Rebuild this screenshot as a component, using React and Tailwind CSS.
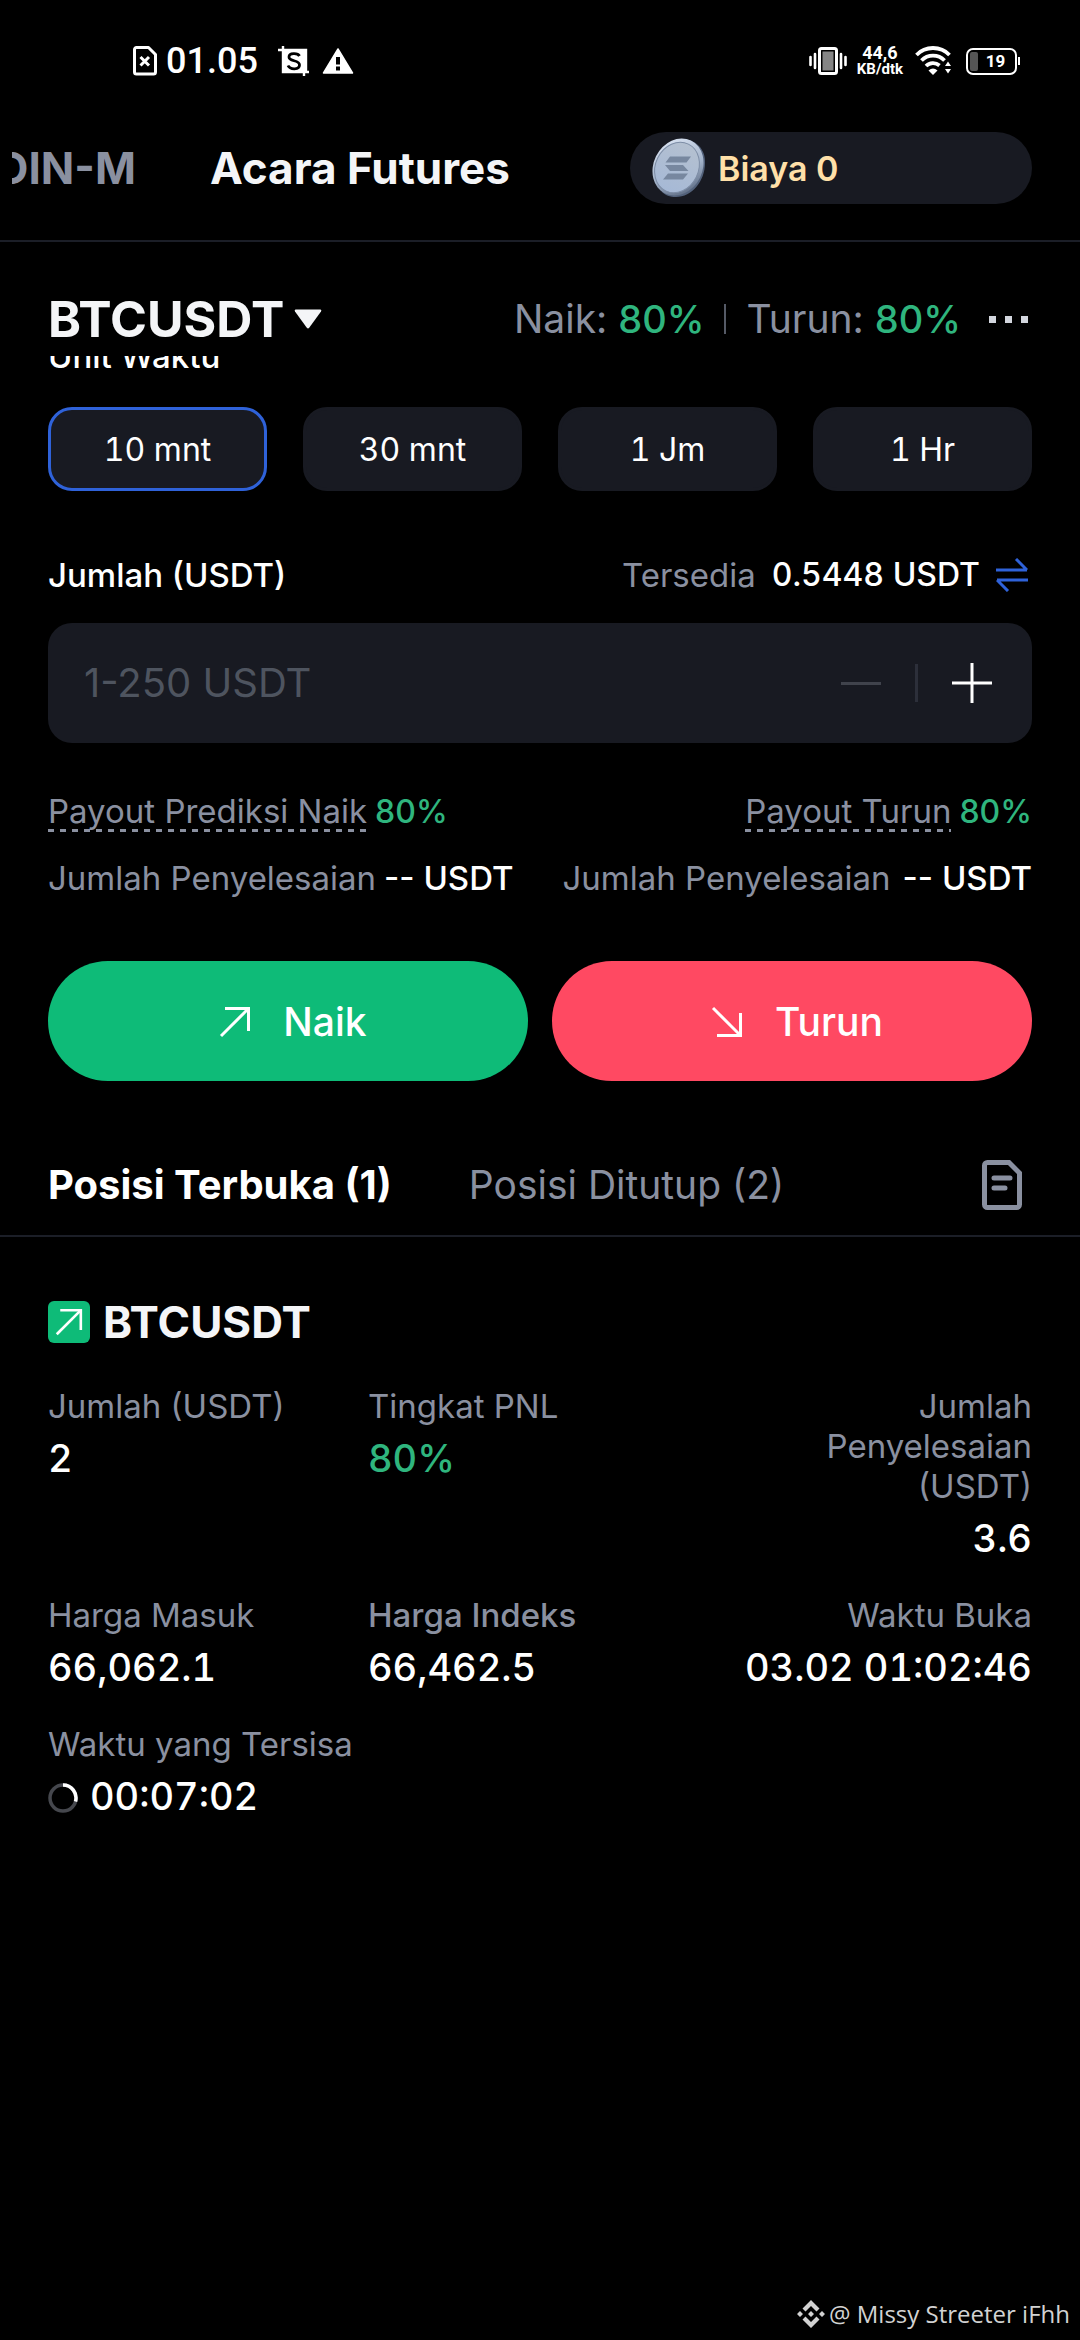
import React, { useState } from "react";

function ArrowUp({ className }) {
  return (
    <svg className={className} viewBox="0 0 32 32" fill="none" stroke="currentColor" strokeWidth="3" aria-hidden="true">
      <path d="M2 30 L29 3" />
      <path d="M6 2.5 H29.5 V25" />
    </svg>
  );
}

function ArrowDown({ className }) {
  return (
    <svg className={className} viewBox="0 0 32 32" fill="none" stroke="currentColor" strokeWidth="3" aria-hidden="true">
      <path d="M2 2 L29 29" />
      <path d="M6 29.5 H29.5 V7" />
    </svg>
  );
}

function StatusBar() {
  return (
    <div className="flex h-[120px] items-center justify-between pt-0.5 pr-[60px] pl-[132px] font-[Roboto,sans-serif]">
      <div className="flex items-center">
        <svg className="h-8 w-[26px]" viewBox="0 0 26 32" fill="none" stroke="white" aria-hidden="true">
          <path d="M4 2.5 H16.5 L23.5 9.5 V27 a2 2 0 0 1 -2 2 H4.500 a2 2 0 0 1 -2 -2 V4.500 a2 2 0 0 1 2 -2 Z" strokeWidth="3" strokeLinejoin="round" />
          <path d="M8.500 12 L17 20.500 M17 12 L8.500 20.500" strokeWidth="3" />
        </svg>
        <span className="ml-2 text-[36px] leading-10 font-medium">01.05</span>
        <svg className="ml-5 size-8" viewBox="0 0 32 32" aria-hidden="true">
          <path d="M4 5 H28 V27 H5 V5 M0 5 H6 M5 1 V8 M24 27 H31 M26 24 V31" fill="white" stroke="white" strokeWidth="2.400" />
          <path d="M21.500 11 C20 8 11 7.500 11 12 C11 17 21.500 14.500 21.500 20 C21.500 25 12 25 10 20.500" fill="none" stroke="black" strokeWidth="2.800" />
        </svg>
        <svg className="ml-3 h-7 w-8" viewBox="0 0 32 28" aria-hidden="true">
          <path d="M16 2 L30.500 26 H1.500 Z" fill="white" stroke="white" strokeWidth="1.500" strokeLinejoin="round" />
          <path d="M16 10 V17.500 M16 19.500 V23.500" stroke="black" strokeWidth="4" />
        </svg>
      </div>
      <div className="flex items-center">
        <svg className="h-7 w-[38px]" viewBox="0 0 38 28" fill="none" stroke="white" strokeWidth="2.600" strokeLinecap="round" aria-hidden="true">
          <rect x="10.500" y="1.500" width="17" height="25" rx="2" strokeWidth="3" />
          <rect x="13.500" y="4.500" width="11" height="19" fill="#858585" stroke="none" />
          <path d="M1.500 10 V18 M6 7 V21 M32 7 V21 M36.500 10 V18" />
        </svg>
        <div className="mr-3 ml-2.5 flex flex-col items-center leading-4 font-bold">
          <span className="text-[18px]">44,6</span>
          <span className="text-[15px]">KB/dtk</span>
        </div>
        <svg className="h-[30px] w-9" viewBox="0 0 36 30" fill="none" stroke="white" strokeWidth="3.800" aria-hidden="true">
          <path d="M1.500 9 A23 23 0 0 1 34.500 9" />
          <path d="M6.500 14.500 A16 16 0 0 1 29.500 14.500" />
          <path d="M11 20 A10 10 0 0 1 24.500 19.500" />
          <path d="M13.500 24.500 Q18 20.500 22.500 24.500 L18 29 Z" fill="white" stroke="none" />
          <path d="M33 15.500 L36 20 H30 Z M30 23 H36 L33 27.500 Z" fill="white" stroke="none" />
        </svg>
        <div className="ml-[15px] flex h-[27px] w-[51px] items-center rounded-[7px] border-2 border-white p-0.5">
          <span className="h-[19px] w-2 rounded-[2px] bg-[#555]" />
          <span className="flex-1 text-center text-[17px] leading-5 font-bold">19</span>
        </div>
        <span className="ml-px h-2 w-0.5 bg-white" />
      </div>
    </div>
  );
}

function Coin() {
  return (
    <svg className="h-[60px] w-14" viewBox="0 0 56 60" aria-hidden="true">
      <defs>
        <linearGradient id="coinEdge" x1="0" y1="0" x2="1" y2="1">
          <stop offset="0" stopColor="#e6eefb" />
          <stop offset="0.550" stopColor="#a3b3ca" />
          <stop offset="1" stopColor="#46546c" />
        </linearGradient>
        <linearGradient id="coinFace" x1="0" y1="0" x2="0" y2="1">
          <stop offset="0" stopColor="#b4c0d0" />
          <stop offset="1" stopColor="#a6b9d6" />
        </linearGradient>
      </defs>
      <path d="M30 1 C44 0 56 10 55 25 C55 43 42 59 26 59 C20 59 15 57 12 54 Z" fill="#52617a" />
      <ellipse cx="28" cy="29" rx="24.500" ry="29.500" transform="rotate(26 28 29)" fill="url(#coinEdge)" />
      <ellipse cx="27" cy="29.500" rx="21.500" ry="26" transform="rotate(26 27 29.500)" fill="url(#coinFace)" stroke="#7d8da6" strokeWidth="1" />
      <path d="M20 18.500 H41 L36.500 24.500 H15.500 Z M15 27 H33 L38.500 33 H20 Z M18 35.500 H38 L33 41.500 H13 Z" fill="#77879f" />
    </svg>
  );
}

function Header() {
  return (
    <header className="flex h-[122px] items-center justify-between border-b-2 border-[#1b1e27] pr-12 pb-6 pl-3">
      <nav className="flex items-center gap-[74px] overflow-hidden text-[44px] leading-[56px] font-bold whitespace-nowrap">
        <a href="#coin" className="-ml-[50px] text-[#8a90a0]">COIN-M</a>
        <a href="#acara" className="text-[#f4f5f7]">Acara Futures</a>
      </nav>
      <button className="flex h-[72px] w-[402px] items-center gap-3 rounded-full bg-[#181a22] pl-5 text-[34px] font-semibold text-[#ffe0a9]">
        <Coin />
        Biaya 0
      </button>
    </header>
  );
}

function PairBar() {
  return (
    <div className="flex h-[114px] items-center justify-between px-12 pt-10">
      <button className="flex items-center gap-2.5 text-[50px] leading-[60px] font-bold text-[#f4f5f7]">
        BTCUSDT
        <svg className="h-5 w-7" viewBox="0 0 28 20" fill="currentColor" aria-hidden="true">
          <path d="M1.500 0.500 H26.500 Q28 1 27 2.500 L15.200 18.800 Q14 20 12.800 18.800 L1 2.500 Q0 1 1.500 0.500 Z" />
        </svg>
      </button>
      <div className="flex items-center text-[39px] leading-[48px] text-[#8a90a0]">
        <span>Naik: <span className="text-[38px] font-medium text-[#2fb57e]">80%</span></span>
        <span className="mx-5 h-[30px] w-0.5 bg-[#555a66]" />
        <span>Turun: <span className="text-[38px] font-medium text-[#2fb57e]">80%</span></span>
        <button className="mr-1 ml-7 flex gap-[9px]" aria-label="Lainnya">
          <span className="size-[7px] bg-[#d3d6de]" />
          <span className="size-[7px] bg-[#d3d6de]" />
          <span className="size-[7px] bg-[#d3d6de]" />
        </button>
      </div>
    </div>
  );
}

function TimeUnits() {
  const [active, setActive] = useState("10 mnt");
  return (
    <section className="overflow-hidden px-12">
      <h2 className="-mt-5 text-[33px] leading-10 font-medium">Unit Waktu</h2>
      <div className="mt-[31px] grid grid-cols-4 gap-9">
        {["10 mnt", "30 mnt", "1 Jm", "1 Hr"].map((t) => (
          <button
            key={t}
            onClick={() => setActive(t)}
            className={
              active === t
                ? "h-[84px] rounded-3xl border-3 border-[#2f62d9] bg-[#181a22] pt-0.5 text-[32px] tabular-nums"
                : "h-[84px] rounded-3xl border-3 border-[#181a22] bg-[#181a22] pt-0.5 text-[32px] tabular-nums"
            }
          >
            {t}
          </button>
        ))}
      </div>
    </section>
  );
}

function Amount() {
  return (
    <section className="mt-16 px-12">
      <div className="flex items-center justify-between text-[33px] leading-10">
        <label htmlFor="amount" className="font-medium">Jumlah (USDT)</label>
        <div className="flex items-center">
          <span className="text-[#8a90a0]">Tersedia</span>
          <span className="ml-4 text-[32px] font-medium tabular-nums">0.5448 USDT</span>
          <button className="mr-1 ml-4" aria-label="Transfer">
            <svg className="block h-[34px] w-8" viewBox="0 0 32 34" fill="none" stroke="#2f62d9" strokeWidth="3" aria-hidden="true">
              <path d="M0 12 H31 M20 1 L31 12 M32 22 H1 M1 22 L12 33" />
            </svg>
          </button>
        </div>
      </div>
      <div className="mt-7 flex h-[120px] items-center rounded-3xl bg-[#181a22] pr-10 pl-9">
        <input id="amount" placeholder="1-250 USDT" className="min-w-0 flex-1 bg-transparent text-[40px] outline-none placeholder:text-[#4e545f]" />
        <button aria-label="Kurangi" className="flex size-10 items-center justify-center">
          <span className="h-[3px] w-10 bg-[#40434c]" />
        </button>
        <span className="mx-[34px] h-[38px] w-[3px] bg-[#2c2f3a]" />
        <button aria-label="Tambah">
          <svg className="block size-10" viewBox="0 0 40 40" stroke="white" strokeWidth="3" aria-hidden="true">
            <path d="M0 20 H40 M20 0 V40" />
          </svg>
        </button>
      </div>
    </section>
  );
}

function Payout({ label, right }) {
  return (
    <div className={right ? "flex flex-col items-end" : "flex flex-col items-start"}>
      <div className="flex items-center gap-2">
        <div>
          <div className="h-[38px] leading-10 font-normal">{label}</div>
          <div className="h-[3px] bg-[repeating-linear-gradient(90deg,#8a90a0_0px,#8a90a0_6px,transparent_6px,transparent_12px)]" />
        </div>
        <span className="text-[32px] font-medium text-[#2fb57e]">80%</span>
      </div>
      <div className={right ? "mt-[26px] flex gap-3" : "mt-[26px] flex gap-2"}>
        <span>Jumlah Penyelesaian</span>
        <span className="font-medium text-white">-- USDT</span>
      </div>
    </div>
  );
}

function Tabs() {
  return (
    <div className="mt-[62px] flex h-[94px] items-center border-b-2 border-[#1b1e27] px-12 pb-2 leading-[48px]">
      <button className="text-[40px] font-bold">Posisi Terbuka (1)</button>
      <button className="ml-[77px] text-[39px] text-[#8a90a0]">Posisi Ditutup (2)</button>
      <button className="mr-2.5 ml-auto" aria-label="Riwayat">
        <svg className="block h-[50px] w-10" viewBox="0 0 40 50" fill="none" stroke="#8a90a0" strokeWidth="5" aria-hidden="true">
          <path d="M5.500 2.500 H27 L37.500 13 V44.500 a3 3 0 0 1 -3 3 H5.500 a3 3 0 0 1 -3 -3 V5.500 a3 3 0 0 1 3 -3 Z" />
          <path d="M12 18 H28 M12 28 H23" strokeLinecap="round" />
        </svg>
      </button>
    </div>
  );
}

function Field({ label, value, right, green, strong, spinner }) {
  return (
    <div className={right ? "pl-20 text-right" : ""}>
      <dt className={strong ? "text-[33px] leading-10 font-medium text-[#8a90a0]" : "text-[33px] leading-10 text-[#8a90a0]"}>{label}</dt>
      <dd
        className={
          green
            ? "mt-1.5 text-[38px] leading-[52px] font-medium text-[#2fb57e] tabular-nums"
            : "mt-1.5 text-[38px] leading-[52px] font-medium whitespace-nowrap tabular-nums"
        }
      >
        {spinner && (
          <svg className="mr-3 mb-1 inline-block size-[30px]" viewBox="0 0 30 30" fill="none" strokeWidth="3.500" aria-hidden="true">
            <circle cx="15" cy="15" r="13" stroke="#45474d" />
            <path d="M15 2 A13 13 0 0 1 27.500 18.500" stroke="white" />
          </svg>
        )}
        {value}
      </dd>
    </div>
  );
}

function Position() {
  return (
    <section className="mt-[59px] px-12">
      <h3 className="flex items-center gap-[13px] text-[44px] leading-[52px] font-bold text-[#f4f5f7]">
        <span className="flex size-[42px] items-center justify-center rounded-md bg-[#0ebb78] text-white">
          <ArrowUp className="size-7" />
        </span>
        BTCUSDT
      </h3>
      <dl className="mt-[38px] grid grid-cols-[320px_280px_1fr] gap-y-[31px]">
        <Field label="Jumlah (USDT)" value="2" />
        <Field label="Tingkat PNL" value="80%" green />
        <Field label="Jumlah Penyelesaian (USDT)" value="3.6" right />
        <Field label="Harga Masuk" value="66,062.1" />
        <Field label="Harga Indeks" value="66,462.5" strong />
        <Field label="Waktu Buka" value="03.02 01:02:46" right />
        <Field label="Waktu yang Tersisa" value="00:07:02" spinner />
      </dl>
    </section>
  );
}

export default function App() {
  return (
    <div className="flex min-h-screen flex-col overflow-hidden bg-black font-[Inter,sans-serif] text-white">
      <StatusBar />
      <Header />
      <PairBar />
      <TimeUnits />
      <Amount />
      <section className="mt-12 flex justify-between px-12 text-[33px] leading-10 text-[#8a90a0]">
        <Payout label="Payout Prediksi Naik" />
        <Payout label="Payout Turun" right />
      </section>
      <div className="mt-[63px] grid grid-cols-2 gap-6 px-12 text-[39px] font-medium">
        <button className="flex h-[120px] items-center justify-center gap-8 rounded-full bg-[#0ebb78] pt-0.5 pl-2.5">
          <ArrowUp className="size-8" />
          Naik
        </button>
        <button className="flex h-[120px] items-center justify-center gap-8 rounded-full bg-[#ff4962] pt-0.5 pl-2.5">
          <ArrowDown className="size-8" />
          Turun
        </button>
      </div>
      <Tabs />
      <Position />
      <footer className="mt-auto flex items-center justify-end gap-1 pr-2.5 pb-2 font-['Open_Sans',sans-serif] text-[24px] leading-9 text-[#d2d2d2]">
        <svg className="size-7" viewBox="0 0 28 28" fill="currentColor" aria-hidden="true">
          <path d="M14 0 L22.500 8.500 L19.500 11.500 L14 6 L8.500 11.500 L5.500 8.500 Z M14 28 L5.500 19.500 L8.500 16.500 L14 22 L19.500 16.500 L22.500 19.500 Z M14 11 L17 14 L14 17 L11 14 Z M3 11 L6 14 L3 17 L0 14 Z M25 11 L28 14 L25 17 L22 14 Z" />
        </svg>
        <span>@ Missy Streeter iFhh</span>
      </footer>
    </div>
  );
}
